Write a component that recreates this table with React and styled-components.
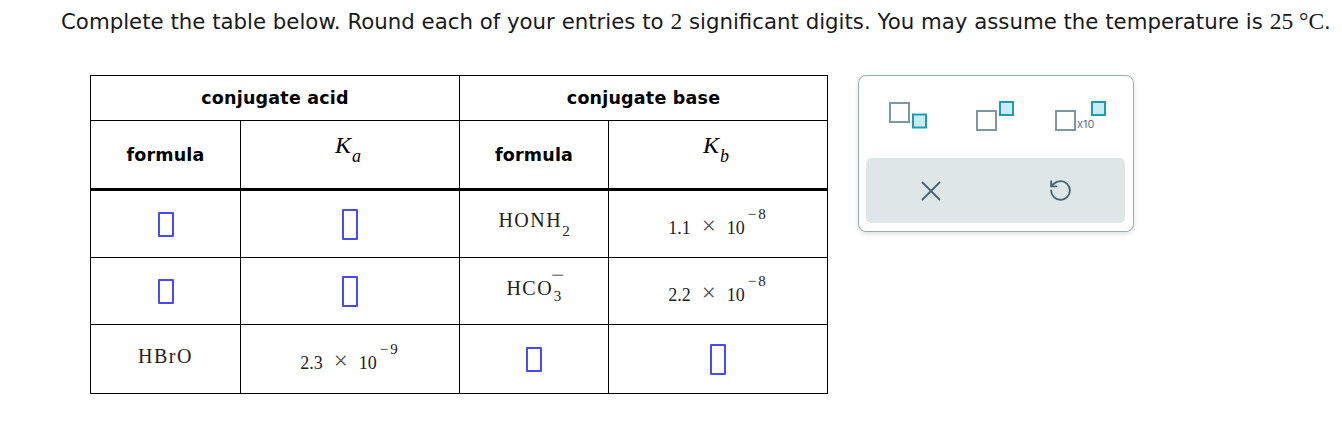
import styled, { createGlobalStyle } from 'styled-components';
import { RotateCcw, X } from 'lucide-react';

const GlobalStyle = createGlobalStyle`
  body {
    margin: 0;
    background: #fff;
    font-family: "DejaVu Sans", Verdana, sans-serif;
  }
`;

const Page = styled.div`
  padding: 6px 0 0 61px;
`;

const Prompt = styled.p`
  margin: 0;
  font-size: 21.3px;
  line-height: 30px;
  color: #1a1a1a;
  white-space: nowrap;
`;

const Serif = styled.span`
  font-family: "Liberation Serif", "Times New Roman", serif;
  font-size: 23.5px;
`;

const Workspace = styled.div`
  display: flex;
  align-items: flex-start;
  gap: 30px;
  margin: 38px 0 0 29px;
`;

const Table = styled.table`
  border-collapse: collapse;
  table-layout: fixed;
  width: 738px;
  color: #000;
`;

const HeadCell = styled.th`
  border: 1px solid #000;
  border-bottom-width: ${(p) => (p.$thick ? '3px' : '1px')};
  height: ${(p) => p.$h}px;
  padding: 0;
  font-size: 17.5px;
  font-weight: bold;
  letter-spacing: 0.2px;
  text-align: center;
  vertical-align: middle;
`;

const Cell = styled.td`
  border: 1px solid #000;
  height: ${(p) => p.$h}px;
  padding: 0;
  text-align: center;
  vertical-align: middle;
`;

const KSym = styled.span`
  font-family: "Liberation Serif", "Times New Roman", serif;
  font-style: italic;
  font-weight: normal;
  font-size: 24px;
  letter-spacing: 0;
  display: inline-block;
  transform: translate(-2px, -5px);

  & > sub {
    font-size: 18px;
    vertical-align: -9px;
    margin-left: 1px;
  }
`;

const Formula = styled.span`
  font-family: "Liberation Serif", "Times New Roman", serif;
  font-size: 20px;
  line-height: 24px;
  height: 24px;
  letter-spacing: 1.5px;
  color: #222;
  display: inline-flex;
  align-items: baseline;
  vertical-align: middle;
  transform: translateY(${(p) => p.$dy || 0}px);
`;

const Script = styled.span`
  display: inline-flex;
  flex-direction: column;
  align-items: center;
  gap: ${(p) => p.$gap || 0}px;
  font-size: 15px;
  line-height: 14px;
  letter-spacing: 0;
  transform: translateY(${(p) => p.$shift}px);
`;

const Charge = styled.span`
  transform: scaleX(1.6);
`;

const Sci = styled.span`
  font-family: "Liberation Serif", "Times New Roman", serif;
  font-size: 18px;
  color: #222;
  display: inline-flex;
  align-items: baseline;
  transform: translateY(4px);
`;

const TimesSign = styled.span`
  margin: 0 11px;
  font-size: 25px;
  line-height: 18px;
  color: #555;
`;

const Sup = styled.span`
  font-size: 15px;
  margin-left: 3px;
  transform: translateY(-15px);
  display: inline-block;
  letter-spacing: 2px;
`;

const InputBox = styled.span`
  display: inline-block;
  box-sizing: border-box;
  width: 16px;
  height: ${(p) => (p.$tall ? 31 : 25)}px;
  border: 2px solid #4a4af4;
  border-radius: 1px;
  vertical-align: middle;
`;

const Panel = styled.div`
  box-sizing: border-box;
  width: 276px;
  height: 157px;
  border: 1px solid #98acb3;
  border-radius: 8px;
  box-shadow: 0 2px 5px rgba(0, 0, 0, 0.12);
  background: #fff;
  padding: 0 8px 8px 7px;
  display: flex;
  flex-direction: column;
`;

const ToolRow = styled.div`
  flex: 1;
  display: grid;
  grid-template-columns: repeat(3, 1fr);
  align-items: center;
  justify-items: center;
`;

const ToolButton = styled.button`
  border: 0;
  background: none;
  padding: 0;
  cursor: pointer;
  display: flex;
`;

const ActionBar = styled.div`
  height: 65px;
  border-radius: 5px;
  background: #dfe6e8;
  display: grid;
  grid-template-columns: 1fr 1fr;
  align-items: center;
  justify-items: center;
  color: #46666f;
`;

const Big = ({ x, y }) => (
  <rect x={x} y={y} width="19" height="19" fill="#fff" stroke="#7f979f" strokeWidth="2" />
);

const Small = ({ x, y }) => (
  <rect x={x} y={y} width="13" height="13" fill="#c9ecf2" stroke="#1a9db3" strokeWidth="2" />
);

const SubIcon = () => (
  <svg width="40" height="30" viewBox="0 0 40 30">
    <Big x="1" y="1" />
    <Small x="24" y="12.5" />
  </svg>
);

const SupIcon = () => (
  <svg width="40" height="32" viewBox="0 0 40 32">
    <Big x="1" y="10" />
    <Small x="24" y="1" />
  </svg>
);

const SciIcon = () => (
  <svg width="54" height="32" viewBox="0 0 54 32">
    <Big x="1" y="10" />
    <text x="22" y="27" fontSize="11" fill="#5d7880" fontFamily="Inter, sans-serif">x10</text>
    <Small x="37" y="1" />
  </svg>
);

const SciValue = ({ mant, exp }) => (
  <Sci>
    {mant}
    <TimesSign>×</TimesSign>
    10
    <Sup>−{exp}</Sup>
  </Sci>
);

export default function App() {
  return (
    <>
      <GlobalStyle />
      <Page>
        <Prompt>
          Complete the table below. Round each of your entries to <Serif>2</Serif> significant digits. You may
          assume the temperature is <Serif>25 °C</Serif>.
        </Prompt>
        <Workspace>
          <Table>
            <colgroup>
              <col style={{ width: 150 }} />
              <col style={{ width: 219 }} />
              <col style={{ width: 149 }} />
              <col style={{ width: 219 }} />
            </colgroup>
            <thead>
              <tr>
                <HeadCell colSpan={2} $h={44}>conjugate acid</HeadCell>
                <HeadCell colSpan={2} $h={44}>conjugate base</HeadCell>
              </tr>
              <tr>
                <HeadCell $thick $h={67}>formula</HeadCell>
                <HeadCell $thick $h={67}>
                  <KSym>K<sub>a</sub></KSym>
                </HeadCell>
                <HeadCell $thick $h={67}>formula</HeadCell>
                <HeadCell $thick $h={67}>
                  <KSym>K<sub>b</sub></KSym>
                </HeadCell>
              </tr>
            </thead>
            <tbody>
              <tr>
                <Cell $h={66}><InputBox /></Cell>
                <Cell $h={66}><InputBox $tall /></Cell>
                <Cell $h={66}>
                  <Formula $dy={-4}>
                    HONH<Script $shift={9}>2</Script>
                  </Formula>
                </Cell>
                <Cell $h={66}><SciValue mant="1.1" exp="8" /></Cell>
              </tr>
              <tr>
                <Cell $h={66}><InputBox /></Cell>
                <Cell $h={66}><InputBox $tall /></Cell>
                <Cell $h={66}>
                  <Formula $dy={-3}>
                    HCO<Script $shift={-15} $gap={7}><Charge>−</Charge><span>3</span></Script>
                  </Formula>
                </Cell>
                <Cell $h={66}><SciValue mant="2.2" exp="8" /></Cell>
              </tr>
              <tr>
                <Cell $h={68}>
                  <Formula $dy={-3}>HBrO</Formula>
                </Cell>
                <Cell $h={68}><SciValue mant="2.3" exp="9" /></Cell>
                <Cell $h={68}><InputBox /></Cell>
                <Cell $h={68}><InputBox $tall /></Cell>
              </tr>
            </tbody>
          </Table>
          <Panel>
            <ToolRow>
              <ToolButton aria-label="subscript"><SubIcon /></ToolButton>
              <ToolButton aria-label="superscript"><SupIcon /></ToolButton>
              <ToolButton aria-label="scientific notation"><SciIcon /></ToolButton>
            </ToolRow>
            <ActionBar>
              <X size={34} strokeWidth={1.3} />
              <RotateCcw size={25} strokeWidth={1.8} />
            </ActionBar>
          </Panel>
        </Workspace>
      </Page>
    </>
  );
}
